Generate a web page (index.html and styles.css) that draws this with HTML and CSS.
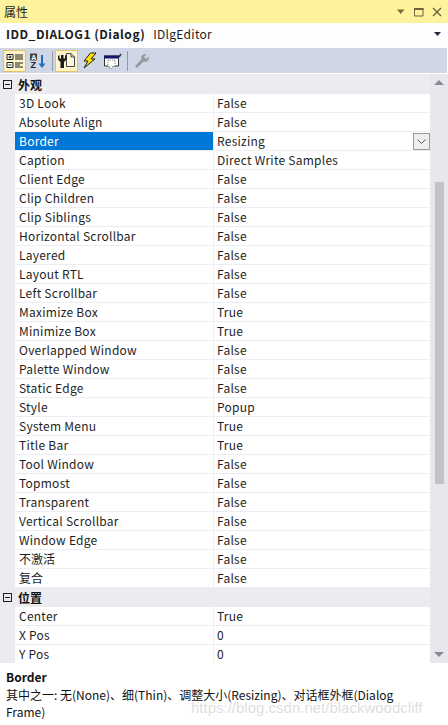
FILE: index.html
```html
<!DOCTYPE html>
<html lang="zh">
<head>
<meta charset="utf-8">
<title>属性</title>
<link rel="stylesheet" href="styles.css">
</head>
<body>
<div class="panel">
  <header class="titlebar">
    <span class="title">属性</span>
    <div class="winbtns">
      <svg width="10" height="6" viewBox="0 0 10 6"><path d="M1 .5h7.500L4.750 5z" fill="#7a6f44"/></svg>
      <svg width="10" height="10" viewBox="0 0 10 10"><path d="M.5 1.500h8.500v7.500H.5z" fill="none" stroke="#6b6340"/><path d="M0 1h9.500v2H0z" fill="#6b6340"/></svg>
      <svg width="10" height="10" viewBox="0 0 10 10"><path d="M1 1l8 8M9 1l-8 8" stroke="#6b6340" stroke-width="1.400" fill="none"/></svg>
    </div>
  </header>
  <div class="objectbar">
    <b class="objname">IDD_DIALOG1 (Dialog)</b>
    <span class="objtype">IDlgEditor</span>
    <svg class="objarrow" width="7" height="4" viewBox="0 0 7 4"><path d="M0 0h7L3.500 4z" fill="#1e2a44"/></svg>
  </div>
  <div class="toolbar">
    <span class="tool on"><svg width="18" height="16" viewBox="0 0 18 16">
      <path d="M1 1.500h6v5H1zM1 9.500h6v5H1z" fill="#fff" stroke="#1f1f1f"/>
      <path d="M2.500 4h3M4 2.500v3M2.500 12h3" stroke="#1f1f1f"/>
      <path d="M9 2h8M9 4h8M9 6h8M9 10h8M9 12h5M9 14h8" stroke="#1f1f1f"/>
    </svg></span>
    <span class="tool"><svg width="18" height="16" viewBox="0 0 18 16">
      <path d="M1 .5h7v7H1z" fill="#444"/>
      <text x="2.200" y="6.600" class="az">A</text>
      <text x="1.500" y="15" class="zz">Z</text>
      <path d="M13 2v10" stroke="#1c6fc0" stroke-width="2"/><path d="M9.500 10.500h7L13 15z" fill="#1c6fc0"/>
    </svg></span>
    <i class="sep"></i>
    <span class="tool on"><svg width="18" height="17" viewBox="0 0 18 17">
      <path d="M8.500 1.500h4.500l3.500 3.500v9.500h-8z" fill="#fff8e0" stroke="#444"/>
      <path d="M13 1.500V5h3.500" fill="none" stroke="#444"/>
      <path d="M0 4v3.500L2.500 10v6h3.500v-6L8.500 7.500V4L7 3v3.500H5.500V3H3v3.500H1.500V3z" fill="#1c1c1c"/>
    </svg></span>
    <span class="tool"><svg width="16" height="17" viewBox="0 0 16 17">
      <path d="M8.500 1L2 9h4l-4 7 11-9H9l5-6z" fill="#ffe600" stroke="#1c1c1c"/>
    </svg></span>
    <span class="tool"><svg width="18" height="16" viewBox="0 0 18 16">
      <path d="M.5 3h14v10h-14z" fill="#fff" stroke="#333"/>
      <path d="M0 2.500h15v3H0z" fill="#14146e"/>
      <path d="M15 4l2-3" stroke="#333" stroke-width="1.500"/>
      <path d="M4 7h7v6.500H8v2H5.500v-2H4z" fill="#fff" stroke="#777" stroke-dasharray="1 1"/>
    </svg></span>
    <i class="sep"></i>
    <span class="tool"><svg width="16" height="16" viewBox="0 0 16 16">
      <path d="M1 13l6.500-6.500c-1-2.500 0-5 3.500-5.500l1.500.3-2.500 2.500 2.200 2.200 2.500-2.500.3 1.500c-.5 3.500-3 4.500-5.500 3.500L3 15z" fill="#97999f"/>
    </svg></span>
  </div>
  <div class="grid-wrap">
    <div class="grid">
      <div class="group first"><span class="box"></span><b>外观</b></div>
      <div class="row"><span class="name">3D Look</span><span class="val">False</span></div>
      <div class="row"><span class="name">Absolute Align</span><span class="val">False</span></div>
      <div class="row"><span class="name sel">Border</span><span class="val">Resizing<span class="combo"><svg width="9" height="5" viewBox="0 0 9 5"><path d="M.5 .5l4 4 4-4" fill="none" stroke="#555"/></svg></span></span></div>
      <div class="row"><span class="name">Caption</span><span class="val">Direct Write Samples</span></div>
      <div class="row"><span class="name">Client Edge</span><span class="val">False</span></div>
      <div class="row"><span class="name">Clip Children</span><span class="val">False</span></div>
      <div class="row"><span class="name">Clip Siblings</span><span class="val">False</span></div>
      <div class="row"><span class="name">Horizontal Scrollbar</span><span class="val">False</span></div>
      <div class="row"><span class="name">Layered</span><span class="val">False</span></div>
      <div class="row"><span class="name">Layout RTL</span><span class="val">False</span></div>
      <div class="row"><span class="name">Left Scrollbar</span><span class="val">False</span></div>
      <div class="row"><span class="name">Maximize Box</span><span class="val">True</span></div>
      <div class="row"><span class="name">Minimize Box</span><span class="val">True</span></div>
      <div class="row"><span class="name">Overlapped Window</span><span class="val">False</span></div>
      <div class="row"><span class="name">Palette Window</span><span class="val">False</span></div>
      <div class="row"><span class="name">Static Edge</span><span class="val">False</span></div>
      <div class="row"><span class="name">Style</span><span class="val">Popup</span></div>
      <div class="row"><span class="name">System Menu</span><span class="val">True</span></div>
      <div class="row"><span class="name">Title Bar</span><span class="val">True</span></div>
      <div class="row"><span class="name">Tool Window</span><span class="val">False</span></div>
      <div class="row"><span class="name">Topmost</span><span class="val">False</span></div>
      <div class="row"><span class="name">Transparent</span><span class="val">False</span></div>
      <div class="row"><span class="name">Vertical Scrollbar</span><span class="val">False</span></div>
      <div class="row"><span class="name">Window Edge</span><span class="val">False</span></div>
      <div class="row"><span class="name cjk">不激活</span><span class="val">False</span></div>
      <div class="row"><span class="name cjk">复合</span><span class="val">False</span></div>
      <div class="group"><span class="box"></span><b>位置</b></div>
      <div class="row"><span class="name">Center</span><span class="val">True</span></div>
      <div class="row"><span class="name">X Pos</span><span class="val">0</span></div>
      <div class="row"><span class="name">Y Pos</span><span class="val">0</span></div>
    </div>
    <div class="scrollbar">
      <svg class="arrow" width="10" height="5" viewBox="0 0 10 5"><path d="M5 0l5 5H0z" fill="#868999"/></svg>
      <div class="track"><div class="thumb"></div></div>
      <svg class="arrow" width="10" height="5" viewBox="0 0 10 5"><path d="M0 0h10L5 5z" fill="#868999"/></svg>
    </div>
  </div>
  <div class="desc">
    <b>Border</b>
    <p>其中之一: 无(None)、细(Thin)、调整大小(Resizing)、对话框外框(Dialog Frame)</p>
  </div>
  <span class="watermark">https://blog.csdn.net/blackwoodcliff</span>
</div>
</body>
</html>
```
FILE: styles.css
```css
html, body { margin: 0; padding: 0; background: #fff; }
body { width: 448px; height: 725px; overflow: hidden; }
.panel {
  position: relative;
  width: 448px;
  height: 725px;
  font-family: "Noto Sans CJK SC", "Noto Sans", sans-serif;
  font-size: 12px;
  color: #1e1e1e;
  display: flex;
  flex-direction: column;
  overflow: hidden;
}
.titlebar {
  height: 23px;
  flex: none;
  background: #fff29d;
  display: flex;
  align-items: center;
  justify-content: space-between;
  padding: 0 6px 0 4px;
}
.winbtns { display: flex; align-items: center; gap: 8px; }
.objectbar {
  height: 25px;
  flex: none;
  box-sizing: border-box;
  background: #fdfdfd;
  display: flex;
  align-items: center;
  padding: 0 7px 4px 6px;
  gap: 8px;
}
.objname { color: #1a1a1a; letter-spacing: .5px; }
.objtype { flex: 1; letter-spacing: .3px; }
.toolbar {
  height: 25px;
  flex: none;
  box-sizing: border-box;
  margin-right: 1px;
  background: #cfd6e5;
  display: flex;
  align-items: center;
  padding-left: 3px;
}
.tool {
  width: 23px;
  height: 22px;
  box-sizing: border-box;
  border: 1px solid transparent;
  display: flex;
  align-items: center;
  justify-content: center;
}
.tool.on { background: #fff3c8; border-color: #e5c365; }
.sep { width: 1px; height: 20px; background: #8f97a8; margin: 0 2px 0 3px; }
.az { font: bold 7px "Liberation Sans", sans-serif; fill: #fff; }
.zz { font: bold 9px "Liberation Sans", sans-serif; fill: #222; }
.grid-wrap {
  flex: none;
  height: 589px;
  margin-top: 1px;
  display: flex;
  background: #ececf0;
  overflow: hidden;
}
.grid { width: 430px; flex: none; }
.group {
  height: 19px;
  display: flex;
  align-items: center;
  background: #ececf0;
  color: #111;
}
.group.first { height: 20px; }
.group b { margin-left: 6px; }
.box {
  width: 9px;
  height: 9px;
  margin-left: 3px;
  box-sizing: border-box;
  border: 1px solid #1e1e1e;
  background: linear-gradient(#1e1e1e, #1e1e1e) center / 5px 1px no-repeat;
}
.row {
  height: 19px;
  box-sizing: border-box;
  margin-left: 15px;
  background: #fff;
  border-bottom: 1px solid #eeeef2;
  display: flex;
  line-height: 18px;
  letter-spacing: .25px;
}
.name {
  width: 199px;
  flex: none;
  box-sizing: border-box;
  padding-left: 4px;
  border-right: 1px solid #eeeef2;
  white-space: nowrap;
}
.name.cjk { letter-spacing: 0; }
.name.sel { background: #0078d7; color: #fff; }
.val {
  flex: 1;
  padding-left: 3px;
  position: relative;
}
.combo {
  position: absolute;
  right: 0;
  top: 1px;
  width: 17px;
  height: 17px;
  box-sizing: border-box;
  border: 1px solid #999;
  background: #eeeeee;
  display: flex;
  align-items: center;
  justify-content: center;
}
.scrollbar {
  width: 18px;
  flex: none;
  background: #e8e8ec;
  display: flex;
  flex-direction: column;
  align-items: center;
  padding: 6px 0;
  box-sizing: border-box;
}
.track { flex: 1; width: 9px; padding-top: 92px; padding-bottom: 163px; display: flex; margin: 5px 0; }
.thumb { flex: 1; background: #c2c3c9; }
.desc {
  flex: 1;
  background: #fff;
  padding: 5px 30px 0 6px;
  line-height: 17.5px;
  color: #111;
}
.desc p { margin: 0; }
.desc b { display: block; }
.watermark {
  position: absolute;
  left: 191px;
  top: 699px;
  font-family: "Liberation Sans", sans-serif;
  font-size: 15px;
  color: rgba(170, 170, 170, .4);
  white-space: nowrap;
}
```
